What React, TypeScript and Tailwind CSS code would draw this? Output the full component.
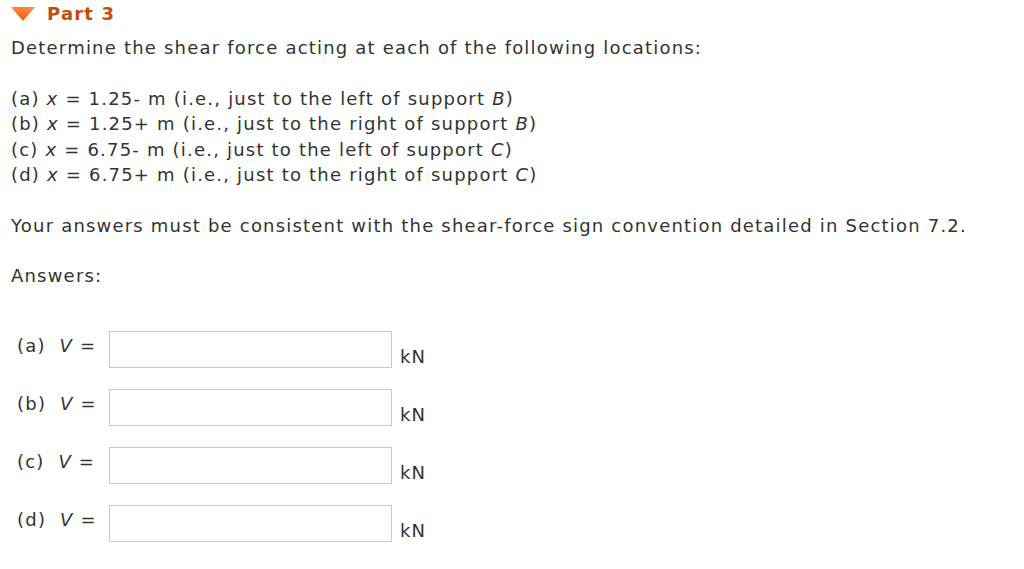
import React from 'react';

const rows = ['a', 'b', 'c', 'd'];

export default function App() {
  return (
    <div className="min-h-[569px] bg-white pl-[11px] text-[18px] leading-[25.5px] tracking-[1.2px] text-[#333] [font-family:'DejaVu_Sans',Verdana,sans-serif]">
      {/* Part header */}
      <div className="flex h-[27px] items-center gap-[12px]">
        <svg width="24" height="14" viewBox="0 0 24 14">
          <defs>
            <linearGradient id="tri" x1="0" y1="0" x2="0" y2="1">
              <stop offset="0" stopColor="#ff8a3d" />
              <stop offset="1" stopColor="#f05a0a" />
            </linearGradient>
          </defs>
          <polygon points="0,0 24,0 12,14" fill="url(#tri)" />
        </svg>
        <span className="font-bold text-[#c9480c]">Part 3</span>
      </div>

      <p className="mt-[8px]">Determine the shear force acting at each of the following locations:</p>

      <div className="mt-[25px]">
        <p>(a) <i>x</i> = 1.25- m (i.e., just to the left of support <i>B</i>)</p>
        <p>(b) <i>x</i> = 1.25+ m (i.e., just to the right of support <i>B</i>)</p>
        <p>(c) <i>x</i> = 6.75- m (i.e., just to the left of support <i>C</i>)</p>
        <p>(d) <i>x</i> = 6.75+ m (i.e., just to the right of support <i>C</i>)</p>
      </div>

      <p className="mt-[25px]">Your answers must be consistent with the shear-force sign convention detailed in Section 7.2.</p>

      <p className="mt-[25px]">Answers:</p>

      <div className="mt-[42px] flex flex-col gap-[21px] pl-[6px]">
        {rows.map(r => (
          <div key={r} className="flex h-[37px] items-start">
            <div className="w-[92px] whitespace-nowrap pt-[2px]">
              ({r})&nbsp; <i>V</i> =
            </div>
            <input
              type="text"
              className="h-[37px] w-[283px] border border-[#c8c8c8] bg-white outline-none"
            />
            <span className="ml-[8px] pt-[13px]">kN</span>
          </div>
        ))}
      </div>
    </div>
  );
}
